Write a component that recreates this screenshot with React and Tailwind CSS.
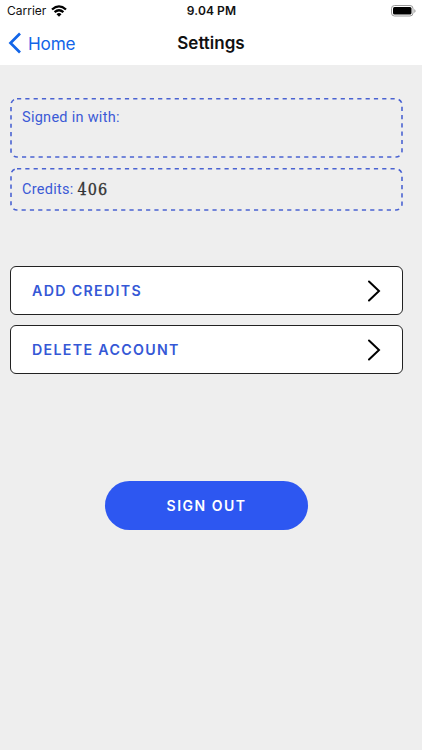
const DashedBox = ({ height, className, children }) => (
  <section className={`relative flex w-[393px] pl-[12px] text-[#3b5ad6] ${className}`}>
    <svg className="absolute inset-0" width="393" height={height} fill="none">
      <rect
        x="1"
        y="0.8"
        width="391"
        height={height - 1.8}
        rx="6"
        stroke="#4a63d2"
        strokeWidth="1.6"
        strokeDasharray="4.2 4.1"
      />
    </svg>
    {children}
  </section>
);

const MenuRow = ({ label }) => (
  <button className="flex h-[49px] w-[393px] items-center justify-between rounded-[6px] border border-[#222] bg-white pr-[21px] pl-[21px] text-[#3558d6]">
    <span className="text-[14.2px] font-semibold tracking-[1.33px]">{label}</span>
    <svg width="14" height="22" viewBox="0 0 14 22" fill="none" stroke="#000" strokeWidth="2">
      <path d="M2 1.5L12 11L2 20.5" strokeLinecap="round" />
    </svg>
  </button>
);

const StatusBar = () => (
  <div className="grid h-[22px] grid-cols-3 items-center pr-[6px] pl-[7px]">
    <div className="flex items-center gap-[5px]">
      <span className="text-[12px] leading-none">Carrier</span>
      <svg width="16" height="12" viewBox="0 0 16 12" fill="none" stroke="#000" strokeWidth="2.3">
        <path d="M1 4.5Q8 -1.8 15 4.5" />
        <path d="M3.6 7.2Q8 3.2 12.4 7.2" />
        <path d="M8 11.7L5.5 9.2Q8 7 10.5 9.2Z" fill="#000" stroke="none" />
      </svg>
    </div>
    <span className="text-center text-[12px] leading-none font-semibold tracking-[0.1px]">9.04 PM</span>
    <svg className="justify-self-end" width="25" height="12" viewBox="0 0 25 12">
      <rect x="0.5" y="0.5" width="21.5" height="10.5" rx="3" fill="none" stroke="#999" />
      <rect x="2" y="2" width="18.5" height="7.5" rx="1.5" />
      <path d="M23.3 4v4q1.3-.8 1.3-2t-1.3-2Z" fill="#999" />
    </svg>
  </div>
);

export default function App() {
  return (
    <div className="flex h-[750px] w-[422px] flex-col overflow-hidden bg-[#eeeeee] font-['Inter',sans-serif] text-[#111]">
      <header className="h-[65px] bg-white">
        <StatusBar />
        <nav className="grid h-[43px] grid-cols-3 items-center pl-[8px] pr-[8px]">
          <button className="flex items-center gap-[6px] text-[#1265e8]">
            <svg width="14" height="22" viewBox="0 0 14 22" fill="none" stroke="currentColor" strokeWidth="2.7">
              <path d="M12 1.5L2.5 11L12 20.5" />
            </svg>
            <span className="text-[17.2px] tracking-[-0.2px]">Home</span>
          </button>
          <h1 className="text-center text-[17px] font-semibold">Settings</h1>
        </nav>
      </header>

      <main className="flex flex-col pt-[33px] pl-[10px]">
        <DashedBox height={60} className="h-[60px] items-start pt-[10px]">
          <span className="font-['Roboto'] text-[14.5px] leading-[20px] tracking-[0.28px]">Signed in with:</span>
        </DashedBox>
        <DashedBox height={43} className="mt-[10px] h-[43px] items-center gap-[4px]">
          <span className="font-['Roboto'] text-[14.5px] leading-[20px] tracking-[0.28px]">Credits:</span>
          <span className="font-['DejaVu_Serif_Condensed','DejaVu_Serif',serif] text-[16px] leading-[20px] tracking-[1.1px] text-[#333] [-webkit-text-stroke:0.3px_#333]">
            406
          </span>
        </DashedBox>

        <div className="mt-[55px] flex flex-col gap-[10px]">
          <MenuRow label="ADD CREDITS" />
          <MenuRow label="DELETE ACCOUNT" />
        </div>

        <button className="mt-[107px] ml-[95px] h-[49px] w-[203px] rounded-full bg-[#2d57f1] text-[14px] font-semibold tracking-[1.5px] text-white">
          SIGN OUT
        </button>
      </main>
    </div>
  );
}
